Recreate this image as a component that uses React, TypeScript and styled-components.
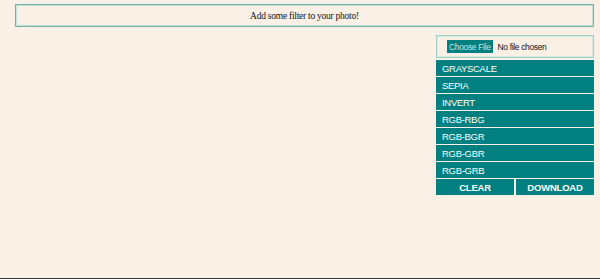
import styled, { createGlobalStyle } from "styled-components";

const GlobalStyle = createGlobalStyle`
  html, body {
    margin: 0;
    padding: 0;
    background-color: #faf0e6;
  }
  body {
    font-family: "Liberation Sans", Arial, sans-serif;
  }
`;

const Page = styled.div`
  height: 279px;
  display: flex;
  flex-direction: column;
  box-sizing: border-box;
  padding: 4px 6px 0 15px;
  border-bottom: 1px solid #333;
`;

const Header = styled.div`
  height: 23px;
  box-sizing: border-box;
  border: 1px solid #6bb8aa;
  box-shadow: inset 0 0 0 1px #c2e0d5;
  display: flex;
  align-items: center;
  justify-content: center;
  font-family: "Liberation Serif", "Times New Roman", serif;
  font-size: 9.5px;
  letter-spacing: -0.25px;
  color: #111;
`;

const Main = styled.div`
  display: flex;
  justify-content: flex-end;
  margin-top: 8px;
`;

const Panel = styled.div`
  width: 158px;
  display: flex;
  flex-direction: column;
`;

const FileBox = styled.label`
  height: 23px;
  box-sizing: border-box;
  border: 1px solid #9fd0c4;
  box-shadow: inset 0 0 0 1px #d6ebe3;
  display: flex;
  align-items: center;
  padding-left: 10px;
  margin-bottom: 2px;
  font-size: 8.5px;
  letter-spacing: -0.35px;
  color: #111;
`;

const FileButton = styled.span`
  background-color: #008080;
  color: #c9e6e1;
  height: 13px;
  padding: 0 2px;
  display: flex;
  align-items: center;
  margin-right: 5px;
`;

const FilterButton = styled.button`
  height: 16px;
  margin: 0 0 1px;
  padding: 0 0 0 6px;
  border: none;
  background-color: #008080;
  color: #fff;
  font-family: "Liberation Sans", Arial, sans-serif;
  font-size: 9.5px;
  letter-spacing: -0.3px;
  text-align: left;
  cursor: pointer;
`;

const ActionRow = styled.div`
  display: flex;
  gap: 2px;
`;

const ActionButton = styled.button`
  flex: 1;
  height: 16px;
  padding: 0;
  border: none;
  background-color: #008080;
  color: #fff;
  font-family: "Liberation Sans", Arial, sans-serif;
  font-size: 9.5px;
  letter-spacing: -0.2px;
  font-weight: bold;
  cursor: pointer;
`;

const filters = [
  "GRAYSCALE",
  "SEPIA",
  "INVERT",
  "RGB-RBG",
  "RGB-BGR",
  "RGB-GBR",
  "RGB-GRB",
];

const App = (): JSX.Element => {
  return (
    <>
      <GlobalStyle />
      <Page>
        <Header>Add some filter to your photo!</Header>
        <Main>
          <Panel>
            <FileBox>
              <FileButton>Choose File</FileButton>
              No file chosen
            </FileBox>
            {filters.map((filter) => (
              <FilterButton key={filter}>{filter}</FilterButton>
            ))}
            <ActionRow>
              <ActionButton>CLEAR</ActionButton>
              <ActionButton>DOWNLOAD</ActionButton>
            </ActionRow>
          </Panel>
        </Main>
      </Page>
    </>
  );
};

export default App;
